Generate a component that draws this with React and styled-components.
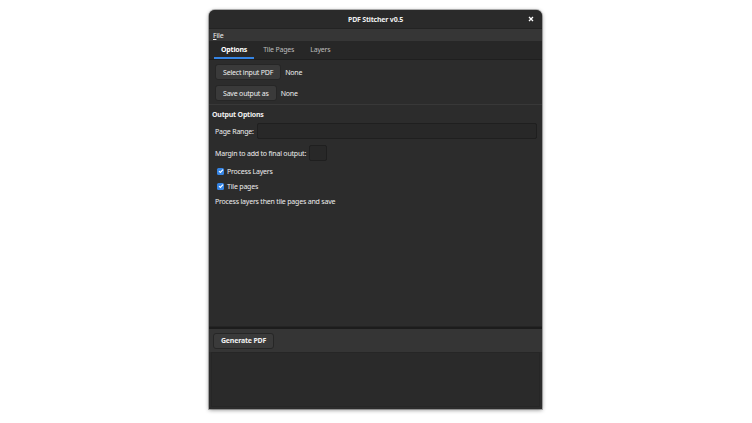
import React from 'react';
import styled, { createGlobalStyle } from 'styled-components';

const Global = createGlobalStyle`
  html, body {
    margin: 0;
    background: #ffffff;
  }
  body {
    font-family: 'Noto Sans', 'DejaVu Sans', sans-serif;
    font-size: 7px;
    letter-spacing: -0.2px;
    color: #eeeeee;
  }
`;

const Stage = styled.div`
  width: 752px;
  height: 423px;
  padding: 10px 0 0 209px;
  box-sizing: border-box;
`;

const Window = styled.div`
  width: 333px;
  height: 399px;
  display: flex;
  flex-direction: column;
  background: #2c2c2c;
  border-radius: 6px 6px 0 0;
  box-shadow: 0 1px 4px rgba(0, 0, 0, 0.45), 0 0 0 1px rgba(0, 0, 0, 0.25);
  overflow: hidden;
`;

const TitleBar = styled.div`
  height: 18px;
  flex: none;
  display: grid;
  grid-template-columns: 20px 1fr 20px;
  align-items: center;
  background: #2a2a2a;
  font-weight: 700;
`;

const Title = styled.div`
  grid-column: 2;
  text-align: center;
`;

const Close = styled.div`
  display: flex;
  align-items: center;
  justify-content: center;
  padding-right: 3px;
`;

const MenuBar = styled.div`
  height: 13px;
  flex: none;
  display: flex;
  align-items: center;
  padding-left: 4px;
  background: #363636;
  border-top: 1px solid #232323;
  box-sizing: border-box;
`;

const Mnemonic = styled.span`
  text-decoration: underline;
  text-underline-offset: 1px;
`;

const TabBar = styled.div`
  height: 19px;
  flex: none;
  display: flex;
  align-items: stretch;
  padding-left: 5px;
  gap: 2px;
  background: #272727;
  border-bottom: 1px solid #1f1f1f;
  box-sizing: border-box;
`;

const Tab = styled.div`
  display: flex;
  align-items: center;
  padding: 0 7px 1px;
  font-weight: ${p => (p.$active ? 700 : 400)};
  color: ${p => (p.$active ? '#ffffff' : '#bdbdbd')};
  box-shadow: ${p => (p.$active ? 'inset 0 -2px 0 #3584e4' : 'none')};
`;

const Content = styled.div`
  flex: 1;
  display: flex;
  flex-direction: column;
  padding: 4px 5px 0 6px;
  min-height: 0;
`;

const Row = styled.div`
  display: flex;
  align-items: center;
  gap: ${p => p.$gap || 4}px;
  height: ${p => p.$h || 16}px;
  margin-top: ${p => p.$mt || 0}px;
`;

const Button = styled.div`
  height: 16px;
  display: flex;
  align-items: center;
  padding: 0 7px;
  border-radius: 3px;
  background: #3a3a3a;
  border: 1px solid #262626;
  box-sizing: border-box;
  color: #f0f0f0;
  font-weight: ${p => (p.$bold ? 700 : 400)};
`;

const Separator = styled.div`
  height: 1px;
  background: #383838;
  margin: 3px -5px 0 -6px;
`;

const SectionTitle = styled.div`
  font-weight: 700;
  margin: 4px 0 0 -3px;
  height: 10px;
  display: flex;
  align-items: center;
`;

const Entry = styled.div`
  height: 16px;
  width: ${p => (p.$w ? `${p.$w}px` : 'auto')};
  flex: ${p => (p.$w ? 'none' : 1)};
  background: #282828;
  border: 1px solid #1f1f1f;
  border-radius: 2px;
  box-sizing: border-box;
`;

const Check = styled.span`
  width: 7px;
  height: 7px;
  margin-left: 2px;
  border-radius: 1.5px;
  background: #3584e4;
  display: flex;
  align-items: center;
  justify-content: center;
`;

const Spacer = styled.div`
  flex: 1;
`;

const PaneHandle = styled.div`
  height: 3px;
  flex: none;
  background: #1c1c1c;
  border-top: 1px solid #242424;
  box-sizing: border-box;
`;

const ActionBar = styled.div`
  height: 23px;
  flex: none;
  display: flex;
  align-items: center;
  padding-left: 4px;
  background: #353535;
`;

const LogView = styled.div`
  flex: none;
  height: 55px;
  margin: 0 2px 2px 2px;
  background: #2a2a2a;
  border: 1px solid #262626;
  box-sizing: border-box;
`;

const CheckMark = () => (
  <svg width="6" height="6" viewBox="0 0 6 6">
    <path d="M1 3.1 L2.4 4.5 L5 1.6" fill="none" stroke="#fff" strokeWidth="1.2" />
  </svg>
);

const CloseIcon = () => (
  <svg width="6" height="6" viewBox="0 0 6 6">
    <path d="M1 1 L5 5 M5 1 L1 5" stroke="#fff" strokeWidth="1.3" />
  </svg>
);

const App = () => (
  <Stage>
    <Global />
    <Window>
      <TitleBar>
        <Title>PDF Stitcher v0.5</Title>
        <Close>
          <CloseIcon />
        </Close>
      </TitleBar>
      <MenuBar>
        <Mnemonic>F</Mnemonic>ile
      </MenuBar>
      <TabBar>
        <Tab $active>Options</Tab>
        <Tab>Tile Pages</Tab>
        <Tab>Layers</Tab>
      </TabBar>
      <Content>
        <Row>
          <Button>Select input PDF</Button>
          <span>None</span>
        </Row>
        <Row $mt={5}>
          <Button>Save output as</Button>
          <span>None</span>
        </Row>
        <Separator />
        <SectionTitle>Output Options</SectionTitle>
        <Row $gap={3} $mt={4}>
          <span>Page Range:</span>
          <Entry />
        </Row>
        <Row $gap={3} $mt={6}>
          <span>Margin to add to final output:</span>
          <Entry $w={18} />
        </Row>
        <Row $h={14} $gap={3} $mt={3}>
          <Check>
            <CheckMark />
          </Check>
          <span>Process Layers</span>
        </Row>
        <Row $h={14} $gap={3} $mt={1}>
          <Check>
            <CheckMark />
          </Check>
          <span>Tile pages</span>
        </Row>
        <Row $h={14} $mt={1}>
          <span>Process layers then tile pages and save</span>
        </Row>
        <Spacer />
      </Content>
      <PaneHandle />
      <ActionBar>
        <Button $bold>Generate PDF</Button>
      </ActionBar>
      <LogView />
    </Window>
  </Stage>
);

export default App;
